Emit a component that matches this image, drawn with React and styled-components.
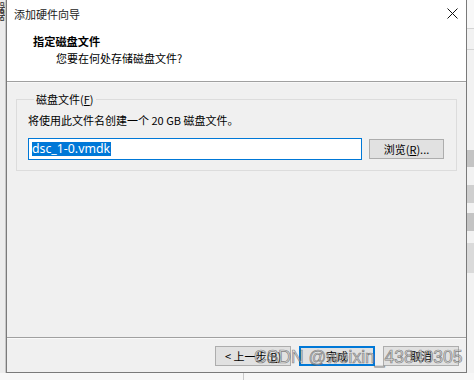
import { styled, createGlobalStyle } from 'styled-components'

const GlobalStyle = createGlobalStyle`
  html, body {
    margin: 0;
    padding: 0;
    background: #f3f3f3;
  }
  body {
    font-family: "Noto Sans CJK SC", "Noto Sans", sans-serif;
    color: #000;
  }
`

const CJK = `"Noto Sans CJK SC", "Noto Sans", sans-serif`

const Page = styled.div`
  position: relative;
  width: 474px;
  height: 380px;
  overflow: hidden;
  display: grid;
  grid-template-columns: 6px 461px 7px;
  grid-template-rows: 373px 7px;
  background: #f3f3f3;
`

const LeftStrip = styled.div`
  background: #ececec;
  border-right: 1px solid #c9c9c9;
  overflow: hidden;
  display: flex;
  flex-direction: column;
  align-items: flex-end;
  padding-top: 3px;
  font-family: ${CJK};
  font-size: 11px;
  line-height: 8px;
  color: #333;
  white-space: nowrap;

  span {
    display: block;
    margin-right: -5px;
  }
`

const RightStrip = styled.div`
  background: #f2f2f2;
  display: flex;
  flex-direction: column;
  overflow: hidden;
`

const StripBlock = styled.div`
  height: ${p => p.$h}px;
  background: ${p => p.$bg || 'transparent'};
  border-bottom: ${p => p.$line ? '1px solid #d4d4d4' : 'none'};
  flex-shrink: 0;
`

const Below = styled.div`
  grid-column: 1 / -1;
  background: #f7f7f7;
  display: flex;

  div {
    margin-left: 243px;
    width: 1px;
    background: #c9c9c9;
  }
`

const Dialog = styled.div`
  display: flex;
  flex-direction: column;
  border: 1px solid #7a7a7a;
  border-top: none;
  background: #f0f0f0;
  box-shadow: 1px 1px 2px rgba(0, 0, 0, 0.12);
`

const TitleBar = styled.div`
  height: 28px;
  background: #fff;
  display: flex;
  align-items: center;
  justify-content: space-between;
  padding: 0 8px 0 7px;
  font-family: ${CJK};
  font-size: 11px;
  color: #1a1a1a;
`

const Close = styled.svg`
  width: 11px;
  height: 11px;
  margin-top: -1px;
`

const Header = styled.div`
  height: 48px;
  background: #fff;
  border-bottom: 1px solid #a0a0a0;
  padding: 5px 0 0 26px;
  display: flex;
  flex-direction: column;
  font-family: ${CJK};
`

const Heading = styled.div`
  font-size: 11.2px;
  font-weight: bold;
  line-height: 16px;
`

const SubHeading = styled.div`
  font-size: 11px;
  line-height: 16px;
  margin-left: 23px;
  margin-top: 1px;
`

const Body = styled.div`
  flex: 1;
  padding: 9px 9px 0 9px;
  border-top: 1px solid #f8f8f8;
`

const Group = styled.fieldset`
  margin: 0;
  border: 1px solid #dcdcdc;
  padding: 6px 12px 10px 11px;
  font-family: ${CJK};
  font-size: 11px;

  legend {
    margin-left: 6px;
    padding: 0 2px;
    line-height: 14px;
  }
`

const Hint = styled.div`
  line-height: 16px;
`

const FileRow = styled.div`
  display: flex;
  align-items: center;
  gap: 7px;
  margin-top: 10px;
`

const PathInput = styled.div`
  flex: 1;
  height: 20px;
  border: 1px solid #0078d7;
  background: #fff;
  display: flex;
  align-items: center;
  padding-left: 3px;

  span {
    background: #0078d7;
    color: #fff;
    font-family: "Noto Sans", sans-serif;
    font-size: 12.3px;
    line-height: 14px;
    padding: 0 1px 0 0;
  }
`

const Button = styled.button`
  width: ${p => p.$w || 76}px;
  height: ${p => p.$h || 20}px;
  margin: 0;
  padding: 0;
  background: #e1e1e1;
  border: 1px solid ${p => p.$primary ? '#0078d7' : '#adadad'};
  box-shadow: ${p => p.$primary ? 'inset 0 0 0 1px #0078d7' : 'none'};
  font-family: ${CJK};
  font-size: 11px;
  color: #000;
  line-height: 1;
`

const Footer = styled.div`
  border-top: 1px solid #a0a0a0;
  box-shadow: inset 0 1px 0 #fafafa;
  display: flex;
  justify-content: flex-end;
  gap: 8px;
  padding: 8px 7px 6px 0;
`

const Watermark = styled.div`
  position: absolute;
  left: 254px;
  top: 346px;
  font-family: "Liberation Sans", Arial, sans-serif;
  font-size: 17.5px;
  line-height: 22px;
  color: rgba(215, 215, 215, 0.45);
  -webkit-text-stroke: 0.7px rgba(85, 85, 85, 0.7);
  white-space: nowrap;
  pointer-events: none;
`

export default function App() {
  return (
    <>
      <GlobalStyle/>
      <Page>
        <LeftStrip>
          <span>器</span>
          <span>器</span>
        </LeftStrip>
        <Dialog>
          <TitleBar>
            <span>添加硬件向导</span>
            <Close viewBox='0 0 11 11'>
              <path d='M0.5 0.5 L10.5 10.5 M10.5 0.5 L0.5 10.5' stroke='#111' strokeWidth='1' fill='none'/>
            </Close>
          </TitleBar>
          <Header>
            <Heading>指定磁盘文件</Heading>
            <SubHeading>您要在何处存储磁盘文件?</SubHeading>
          </Header>
          <Body>
            <Group>
              <legend>磁盘文件(<u>F</u>)</legend>
              <Hint>将使用此文件名创建一个 20 GB 磁盘文件。</Hint>
              <FileRow>
                <PathInput><span>dsc_1-0.vmdk</span></PathInput>
                <Button $w={75} $h={20}>浏览(<u>R</u>)...</Button>
              </FileRow>
            </Group>
          </Body>
          <Footer>
            <Button>&lt; 上一步(<u>B</u>)</Button>
            <Button $primary>完成</Button>
            <Button>取消</Button>
          </Footer>
        </Dialog>
        <RightStrip>
          <StripBlock $h={28} $bg='#f8f8f8' $line/>
          <StripBlock $h={20} $line/>
          <StripBlock $h={100}/>
          <StripBlock $h={17} $bg='#c4c4c4'/>
          <StripBlock $h={18}/>
          <StripBlock $h={18} $bg='#cfcfcf'/>
          <StripBlock $h={10}/>
          <StripBlock $h={18} $bg='#c4c4c4'/>
          <StripBlock $h={12}/>
          <StripBlock $h={30} $bg='#dadada'/>
        </RightStrip>
        <Below><div/></Below>
        <Watermark>CSDN @weixin_43840305</Watermark>
      </Page>
    </>
  )
}
